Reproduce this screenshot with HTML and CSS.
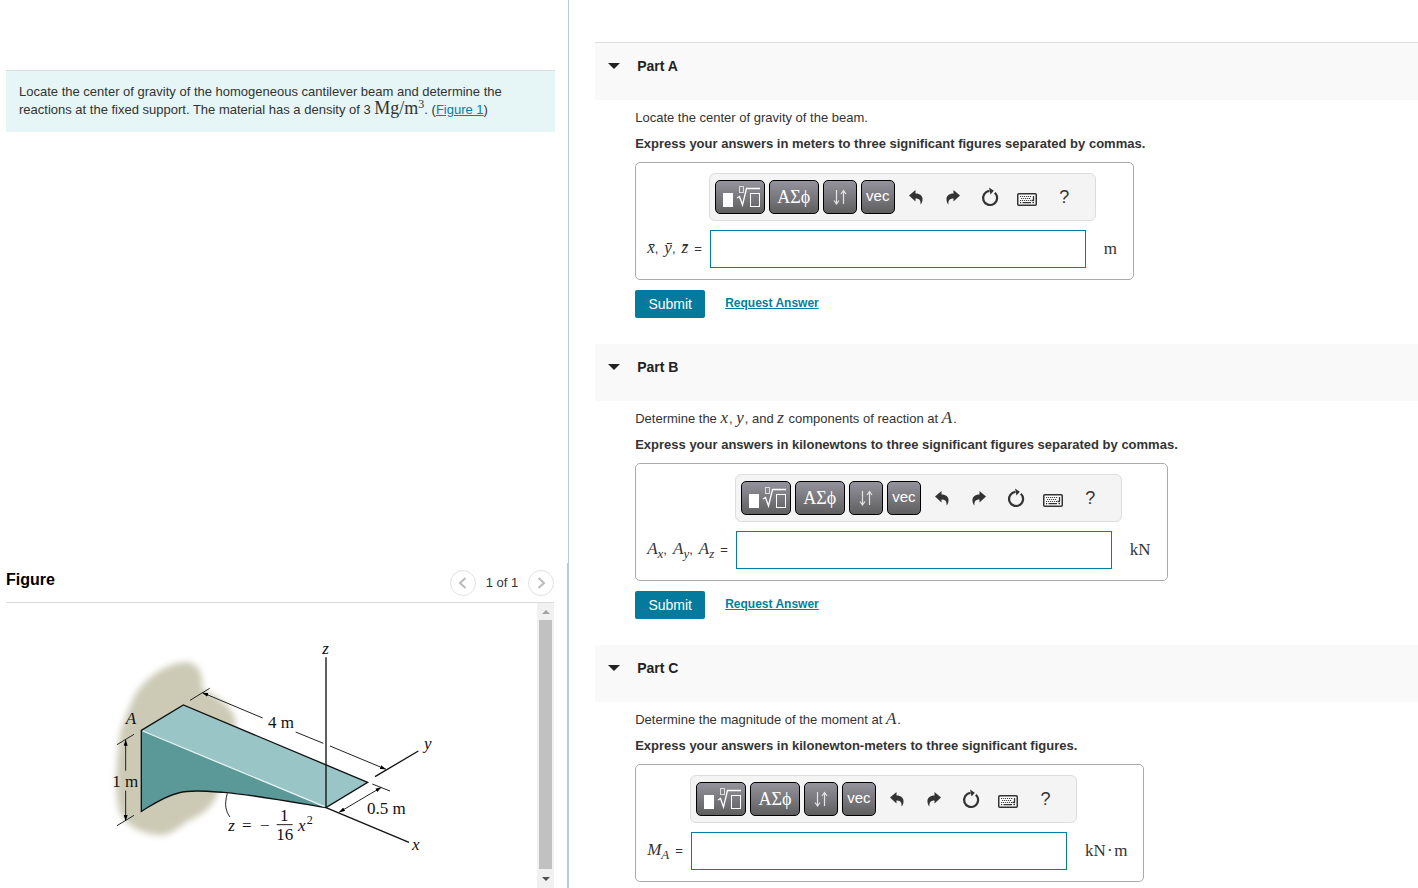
FILE: index.html
```html
<!DOCTYPE html>
<html lang="en">
<head>
  <meta charset="UTF-8" />
  <meta name="viewport" content="width=device-width, initial-scale=1.0" />
  <title>Cantilever Beam</title>
  <link rel="stylesheet" href="styles.css">
</head>
<body>
  <!-- Shared toolbar icons -->
  <svg class="icon-defs" aria-hidden="true">
    <symbol id="i-template" viewBox="0 0 48 32">
      <rect x="7" y="12" width="10" height="14" fill="#fff"/>
      <rect x="23.5" y="5.5" width="4" height="6" fill="none" stroke="#ddd"/>
      <path d="M21 17L23.5 15.5L26.5 24L30.5 7.5H44" fill="none" stroke="#fff" stroke-width="1.3"/>
      <rect x="34.5" y="12.5" width="9" height="13" fill="none" stroke="#fff"/>
    </symbol>
    <symbol id="i-arrows" viewBox="0 0 32 32">
      <path d="M12.5 9V22M10 19.5L12.5 23L15 19.5M19.5 23V10M17 13L19.5 9.5L22 13" fill="none" stroke="#e4e4e4" stroke-width="1.2"/>
    </symbol>
    <symbol id="i-undo" viewBox="0 0 14 15">
      <path d="M0 5.5L6.5 0V3.5C11 3.5 14 6 13.5 10C13.3 12 12.5 13.5 11.5 14.5C12 10.5 10.5 8.5 6.5 8.5V11.5Z" fill="#333"/>
    </symbol>
    <symbol id="i-reset" viewBox="0 0 18 20">
      <path d="M13.8 5.8A7 7 0 1 1 8.5 4" fill="none" stroke="#333" stroke-width="2.2"/>
      <path d="M8 0.5L12.8 3.8L9.5 7.5Z" fill="#333"/>
    </symbol>
    <symbol id="i-keyboard" viewBox="0 0 20 13">
      <rect x="0.75" y="0.75" width="18.5" height="11.5" rx="1" fill="#fff" stroke="#333" stroke-width="1.5"/>
      <path d="M3 3.5H15M4 5.5H14M3 7.5H14" stroke="#444" stroke-width="1.2" stroke-dasharray="1.2 0.8"/>
      <path d="M16.5 3V7.5H14.5M5.5 9.7H14M3 9.7H4.2M15.5 9.7H17" fill="none" stroke="#333" stroke-width="1.3"/>
    </symbol>
  </svg>

  <div class="page">
    <aside class="left-pane">
      <section class="problem">
        Locate the center of gravity of the homogeneous cantilever beam and determine the reactions at the fixed support. The material has a density of 3 <span class="math">Mg/m<sup>3</sup></span>. (<a href="#figure">Figure 1</a>)
      </section>

      <section class="figure" id="figure">
        <div class="figure-head">
          <h2>Figure</h2>
          <div class="pager">
            <button type="button" aria-label="Previous figure"><svg width="9" height="12" viewBox="0 0 9 12"><path d="M7.5 1L2 6L7.5 11"/></svg></button>
            <span>1 of 1</span>
            <button type="button" aria-label="Next figure"><svg width="9" height="12" viewBox="0 0 9 12"><path d="M1.5 1L7 6L1.5 11"/></svg></button>
          </div>
        </div>
        <div class="figure-body">
          <div class="drawing">
            <svg width="360" height="230" viewBox="0 0 1080 690" role="img" aria-label="Cantilever beam fixed to a wall at A">
              <defs>
                <filter id="soft" x="-10%" y="-10%" width="120%" height="120%"><feGaussianBlur stdDeviation="9"/></filter>
                <marker id="tip" viewBox="0 0 18 12" refX="18" refY="6" markerWidth="18" markerHeight="12" markerUnits="userSpaceOnUse" orient="auto-start-reverse"><path d="M0 0L18 6L0 12Z"/></marker>
              </defs>
              <!-- wall -->
              <path class="wall" filter="url(#soft)" d="M126 185C146 130 220 68 288 66C330 68 340 110 337 148C374 165 404 185 424 212C450 250 434 280 410 310L388 440C378 500 335 525 290 545C260 570 230 590 205 585C160 580 106 562 88 512C72 460 80 350 92 270C106 240 112 210 126 185Z"/>
              <!-- beam -->
              <path class="beam-top" d="M154 271L280 195L833 427L708 503Z"/>
              <path class="beam-side" d="M154 271L708 503C600 485 480 463 400 457C340 453 300 450 265 459C225 468 190 492 154 514Z"/>
              <path class="edge" d="M154 271L280 195L833 427L708 503C600 485 480 463 400 457C340 453 300 450 265 459C225 468 190 492 154 514Z"/>
              <path class="shine" d="M158 273L704 500"/>
              <!-- axes -->
              <path class="axis" d="M708 52V503M708 503L957 607M855 410L985 333"/>
              <!-- dimensions -->
              <path class="dim" d="M300 181L359 145M81 314L132 283M81 557L132 526M847 432L900 453M412 460C402 495 408 515 420 531"/>
              <path class="dim" marker-start="url(#tip)" d="M337 158L518 234"/>
              <path class="dim" d="M617 276L700 310"/>
              <path class="dim" marker-end="url(#tip)" d="M720 318L888 388"/>
              <path class="dim" marker-start="url(#tip)" d="M107 299V392"/>
              <path class="dim" marker-end="url(#tip)" d="M107 452V543"/>
              <path class="dim" marker-start="url(#tip)" marker-end="url(#tip)" d="M747 517L874 442"/>
              <g class="labels">
                <text class="it" x="697" y="42">z</text>
                <text class="it" x="1002" y="328">y</text>
                <text class="it" x="966" y="631">x</text>
                <text class="it" x="107" y="252">A</text>
                <text x="67" y="440">1 m</text>
                <text x="534" y="265">4 m</text>
                <text x="831" y="521">0.5 m</text>
                <text class="it" x="415" y="574">z</text>
                <text x="456" y="574">=</text>
                <text x="510" y="574">−</text>
                <text x="570" y="542">1</text>
                <text x="559" y="599">16</text>
                <text class="it" x="624" y="574">x</text>
                <text class="small" x="650" y="552">2</text>
                <path class="bar" d="M560 554H608"/>
              </g>
            </svg>
          </div>
          <div class="scrollbar" aria-hidden="true">
            <span class="arrow up"></span>
            <span class="thumb"></span>
            <span class="arrow down"></span>
          </div>
        </div>
      </section>
    </aside>

    <main class="right-pane">
      <section class="part">
        <header class="part-head"><button type="button" class="toggle" aria-expanded="true"><span class="caret"></span>Part A</button></header>
        <div class="part-body">
          <p>Locate the center of gravity of the beam.</p>
          <p class="instruction">Express your answers in meters to three significant figures separated by commas.</p>
          <form class="answer">
            <div class="toolbar">
              <button type="button" class="key wide" aria-label="Templates"><svg width="48" height="32"><use href="#i-template"/></svg></button>
              <button type="button" class="key wide greek">ΑΣϕ</button>
              <button type="button" class="key" aria-label="Arrows"><svg width="32" height="32"><use href="#i-arrows"/></svg></button>
              <button type="button" class="key vec">vec</button>
              <div class="tools">
                <button type="button" aria-label="Undo"><svg width="14" height="15"><use href="#i-undo"/></svg></button>
                <button type="button" aria-label="Redo"><svg class="flip" width="14" height="15"><use href="#i-undo"/></svg></button>
                <button type="button" aria-label="Reset"><svg width="18" height="20"><use href="#i-reset"/></svg></button>
                <button type="button" class="low" aria-label="Keyboard"><svg width="20" height="13"><use href="#i-keyboard"/></svg></button>
                <button type="button" aria-label="Help">?</button>
              </div>
            </div>
            <label for="answer-a"><span><i>x̄</i>,</span> <span><i>ȳ</i>,</span> <span><i>z̄</i></span> <span>=</span></label>
            <input type="text" id="answer-a">
            <span class="unit">m</span>
          </form>
          <div class="actions"><button type="button" class="submit">Submit</button><a href="#">Request Answer</a></div>
        </div>
      </section>

      <section class="part">
        <header class="part-head"><button type="button" class="toggle" aria-expanded="true"><span class="caret"></span>Part B</button></header>
        <div class="part-body">
          <p>Determine the <i>x</i>, <i>y</i>, and <i>z</i> components of reaction at <i>A</i>.</p>
          <p class="instruction">Express your answers in kilonewtons to three significant figures separated by commas.</p>
          <form class="answer">
            <div class="toolbar">
              <button type="button" class="key wide" aria-label="Templates"><svg width="48" height="32"><use href="#i-template"/></svg></button>
              <button type="button" class="key wide greek">ΑΣϕ</button>
              <button type="button" class="key" aria-label="Arrows"><svg width="32" height="32"><use href="#i-arrows"/></svg></button>
              <button type="button" class="key vec">vec</button>
              <div class="tools">
                <button type="button" aria-label="Undo"><svg width="14" height="15"><use href="#i-undo"/></svg></button>
                <button type="button" aria-label="Redo"><svg class="flip" width="14" height="15"><use href="#i-undo"/></svg></button>
                <button type="button" aria-label="Reset"><svg width="18" height="20"><use href="#i-reset"/></svg></button>
                <button type="button" class="low" aria-label="Keyboard"><svg width="20" height="13"><use href="#i-keyboard"/></svg></button>
                <button type="button" aria-label="Help">?</button>
              </div>
            </div>
            <label for="answer-b"><span><i>A<sub>x</sub></i>,</span> <span><i>A<sub>y</sub></i>,</span> <span><i>A<sub>z</sub></i></span> <span>=</span></label>
            <input type="text" id="answer-b">
            <span class="unit">kN</span>
          </form>
          <div class="actions"><button type="button" class="submit">Submit</button><a href="#">Request Answer</a></div>
        </div>
      </section>

      <section class="part">
        <header class="part-head"><button type="button" class="toggle" aria-expanded="true"><span class="caret"></span>Part C</button></header>
        <div class="part-body">
          <p>Determine the magnitude of the moment at <i>A</i>.</p>
          <p class="instruction">Express your answers in kilonewton-meters to three significant figures.</p>
          <form class="answer">
            <div class="toolbar">
              <button type="button" class="key wide" aria-label="Templates"><svg width="48" height="32"><use href="#i-template"/></svg></button>
              <button type="button" class="key wide greek">ΑΣϕ</button>
              <button type="button" class="key" aria-label="Arrows"><svg width="32" height="32"><use href="#i-arrows"/></svg></button>
              <button type="button" class="key vec">vec</button>
              <div class="tools">
                <button type="button" aria-label="Undo"><svg width="14" height="15"><use href="#i-undo"/></svg></button>
                <button type="button" aria-label="Redo"><svg class="flip" width="14" height="15"><use href="#i-undo"/></svg></button>
                <button type="button" aria-label="Reset"><svg width="18" height="20"><use href="#i-reset"/></svg></button>
                <button type="button" class="low" aria-label="Keyboard"><svg width="20" height="13"><use href="#i-keyboard"/></svg></button>
                <button type="button" aria-label="Help">?</button>
              </div>
            </div>
            <label for="answer-c"><span><i>M<sub>A</sub></i></span> <span>=</span></label>
            <input type="text" id="answer-c">
            <span class="unit">kN&hairsp;·&hairsp;m</span>
          </form>
        </div>
      </section>
    </main>
  </div>
</body>
</html>
```
FILE: styles.css
```css
/* Base Styles */
* {
  box-sizing: border-box;
  margin: 0;
  padding: 0;
}
body {
  font-family: "Liberation Sans", Arial, sans-serif;
  font-size: 13px;
  line-height: 18px;
  color: #333;
  background: #fff;
}
button {
  font: inherit;
  color: inherit;
  border: 0;
  background: none;
  cursor: pointer;
}
a {
  color: #007fa3;
}
sup, sub {
  font-size: 13px;
  line-height: 0;
}
sup {
  font-size: 12px;
  vertical-align: 6px;
}
i, .math, .unit {
  font-family: "Liberation Serif", "Times New Roman", serif;
  font-size: 17px;
  line-height: 14px;
}
.math {
  font-size: 18px;
}
.icon-defs {
  display: none;
}

.page {
  display: flex;
  height: 100vh;
  overflow: hidden;
}

/* Left Pane */
.left-pane {
  flex: 0 0 calc(40% + 2px);
  display: flex;
  flex-direction: column;
  justify-content: space-between;
  padding-top: 70px;
  border-right: 1px solid #b8cbdb;
}
.problem {
  margin: 0 13px 0 6px;
  padding: 12px 13px 13px;
  border-top: 1px solid #dcdcdc;
  background: #e6f6f6;
}
.figure {
  padding: 0 13px 0 6px;
  border-right: 1px solid #b8cbdb;
}
.figure-head {
  display: flex;
  align-items: center;
  justify-content: space-between;
  height: 40px;
  border-bottom: 1px solid #dcdcdc;
}
.figure-head h2 {
  font-size: 16px;
  color: #000;
  padding-bottom: 6px;
}
.pager {
  display: flex;
  align-items: center;
  gap: 10px;
}
.pager button {
  display: flex;
  align-items: center;
  justify-content: center;
  width: 26px;
  height: 26px;
  border: 1px solid #e2e2e2;
  border-radius: 50%;
}
.pager path {
  fill: none;
  stroke: #bbb;
  stroke-width: 2;
}
.figure-body {
  display: flex;
  height: 285px;
}
.drawing {
  flex: 1;
  padding: 37px 0 0 84px;
}
.drawing svg {
  overflow: visible;
}
.scrollbar {
  display: flex;
  flex-direction: column;
  align-items: center;
  width: 17px;
  background: #f1f1f1;
}
.scrollbar .thumb {
  flex: 1;
  width: 13px;
  background: #c1c1c1;
}
.arrow {
  height: 17px;
  display: flex;
  align-items: center;
}
.arrow::before {
  content: "";
  border: 4px solid transparent;
}
.arrow.up::before {
  border-top: 0;
  border-bottom-color: #a3a3a3;
}
.arrow.down {
  height: 19px;
}
.arrow.down::before {
  border-bottom: 0;
  border-top-color: #505050;
}

/* Beam Drawing */
.wall { fill: #cccab5; }
.beam-top { fill: #99c5c6; }
.beam-side { fill: #5b9898; }
.edge, .axis {
  fill: none;
  stroke: #111;
  stroke-width: 4;
}
.shine {
  stroke: #e4f1f1;
  stroke-width: 4;
}
.dim, .bar {
  fill: none;
  stroke: #222;
  stroke-width: 3;
}
.labels {
  font-family: "Liberation Serif", "Times New Roman", serif;
  font-size: 51px;
  fill: #111;
}
.labels .it { font-style: italic; }
.labels .small { font-size: 36px; }

/* Right Pane */
.right-pane {
  flex: 1;
  padding: 42px 0 0 26px;
}
.part + .part {
  margin-top: 26px;
}
.part-head {
  height: 57px;
  padding: 14px 13px;
  background: #f9f9f9;
}
.part:first-child .part-head {
  height: 58px;
  border-top: 1px solid #dcdcdc;
}
.toggle {
  display: flex;
  align-items: center;
  gap: 17px;
  font-size: 14px;
  font-weight: bold;
  color: #222;
}
.caret {
  border: 6px solid transparent;
  border-top-color: #222;
  border-bottom: 0;
}
.part-body {
  padding: 9px 0 0 40px;
}
.part-body p {
  margin-bottom: 8px;
}
.part-body p i {
  padding-right: 1px;
}
.part-body .instruction {
  font-weight: bold;
  margin-bottom: 9px;
}

/* Answer Box */
.answer {
  display: grid;
  grid-template-columns: auto auto auto;
  align-items: center;
  row-gap: 9px;
  width: fit-content;
  padding: 10px 16px 11px 11px;
  border: 1px solid #aaa;
  border-radius: 5px;
}
.answer label {
  display: flex;
  align-items: baseline;
  gap: 6px;
  padding-right: 7px;
}
.answer input {
  width: 376px;
  height: 38px;
  margin-left: 1px;
  padding: 0 8px;
  border: 1px solid #007fa3;
  font: inherit;
}
.unit {
  padding-left: 18px;
}
.toolbar {
  grid-column: 2 / 4;
  justify-self: start;
  display: flex;
  align-items: center;
  gap: 4px;
  width: 387px;
  height: 48px;
  padding: 0 5px;
  border: 1px solid #ddd;
  border-radius: 6px;
  background: #f4f4f4;
}
.key {
  display: flex;
  align-items: center;
  justify-content: center;
  width: 34px;
  height: 34px;
  border: 1px solid #000;
  border-radius: 5px;
  background: linear-gradient(#94929c, #5f5f5f);
  color: #fff;
  font-size: 15px;
}
.key.wide {
  width: 50px;
}
.key.greek {
  font-family: "Liberation Serif", "Times New Roman", serif;
  font-size: 18px;
}
.key.vec {
  padding-bottom: 3px;
}
.tools {
  display: flex;
  gap: 4px;
  margin-left: 1px;
}
.tools button {
  display: flex;
  align-items: center;
  justify-content: center;
  width: 33px;
  height: 34px;
  font-size: 18px;
}
.tools .low {
  padding-top: 4px;
}
.flip {
  transform: scaleX(-1);
}

/* Actions */
.actions {
  display: flex;
  align-items: center;
  gap: 20px;
  margin-top: 10px;
}
.submit {
  width: 70px;
  height: 28px;
  border-radius: 2px;
  background: #047a9c;
  color: #fff;
  font-size: 14px;
}
.actions a {
  padding-bottom: 3px;
  font-size: 12px;
  font-weight: bold;
}
```
